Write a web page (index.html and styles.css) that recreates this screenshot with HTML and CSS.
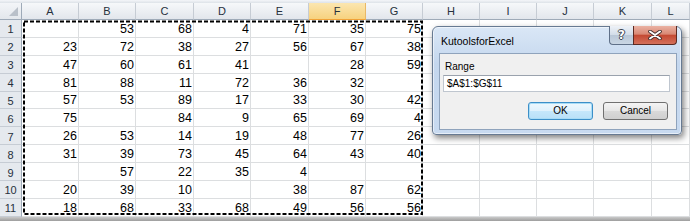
FILE: index.html
```html
<!DOCTYPE html>
<html>
<head>
<meta charset="utf-8">
<link rel="stylesheet" href="styles.css">
</head>
<body>
<div class="sheet">
  <div class="topstrip"></div>
  <div class="grid">
    <div class="corner"><svg width="9" height="9" viewBox="0 0 9 9"><path d="M9 0V9H0Z" fill="#b9c0c9"/></svg></div>
    <div class="ch">A</div><div class="ch">B</div><div class="ch">C</div><div class="ch">D</div><div class="ch">E</div><div class="ch sel">F</div><div class="ch">G</div><div class="ch">H</div><div class="ch">I</div><div class="ch">J</div><div class="ch">K</div><div class="ch">L</div>

    <div class="rh">1</div><div class="c"></div><div class="c">53</div><div class="c">68</div><div class="c">4</div><div class="c">71</div><div class="c">35</div><div class="c">75</div><div class="c"></div><div class="c"></div><div class="c"></div><div class="c"></div><div class="c"></div>
    <div class="rh">2</div><div class="c">23</div><div class="c">72</div><div class="c">38</div><div class="c">27</div><div class="c">56</div><div class="c">67</div><div class="c">38</div><div class="c"></div><div class="c"></div><div class="c"></div><div class="c"></div><div class="c"></div>
    <div class="rh">3</div><div class="c">47</div><div class="c">60</div><div class="c">61</div><div class="c">41</div><div class="c"></div><div class="c">28</div><div class="c">59</div><div class="c"></div><div class="c"></div><div class="c"></div><div class="c"></div><div class="c"></div>
    <div class="rh">4</div><div class="c">81</div><div class="c">88</div><div class="c">11</div><div class="c">72</div><div class="c">36</div><div class="c">32</div><div class="c"></div><div class="c"></div><div class="c"></div><div class="c"></div><div class="c"></div><div class="c"></div>
    <div class="rh">5</div><div class="c">57</div><div class="c">53</div><div class="c">89</div><div class="c">17</div><div class="c">33</div><div class="c">30</div><div class="c">42</div><div class="c"></div><div class="c"></div><div class="c"></div><div class="c"></div><div class="c"></div>
    <div class="rh">6</div><div class="c">75</div><div class="c"></div><div class="c">84</div><div class="c">9</div><div class="c">65</div><div class="c">69</div><div class="c">4</div><div class="c"></div><div class="c"></div><div class="c"></div><div class="c"></div><div class="c"></div>
    <div class="rh">7</div><div class="c">26</div><div class="c">53</div><div class="c">14</div><div class="c">19</div><div class="c">48</div><div class="c">77</div><div class="c">26</div><div class="c"></div><div class="c"></div><div class="c"></div><div class="c"></div><div class="c"></div>
    <div class="rh">8</div><div class="c">31</div><div class="c">39</div><div class="c">73</div><div class="c">45</div><div class="c">64</div><div class="c">43</div><div class="c">40</div><div class="c"></div><div class="c"></div><div class="c"></div><div class="c"></div><div class="c"></div>
    <div class="rh">9</div><div class="c"></div><div class="c">57</div><div class="c">22</div><div class="c">35</div><div class="c">4</div><div class="c"></div><div class="c"></div><div class="c"></div><div class="c"></div><div class="c"></div><div class="c"></div><div class="c"></div>
    <div class="rh">10</div><div class="c">20</div><div class="c">39</div><div class="c">10</div><div class="c"></div><div class="c">38</div><div class="c">87</div><div class="c">62</div><div class="c"></div><div class="c"></div><div class="c"></div><div class="c"></div><div class="c"></div>
    <div class="rh">11</div><div class="c">18</div><div class="c">68</div><div class="c">33</div><div class="c">68</div><div class="c">49</div><div class="c">56</div><div class="c">56</div><div class="c"></div><div class="c"></div><div class="c"></div><div class="c"></div><div class="c"></div>
  </div>
  <div class="hbar"></div>

  <svg class="ants" width="690" height="221" viewBox="0 0 690 221">
    <rect x="24" y="21.5" width="398" height="192.5" fill="none" stroke="#000" stroke-width="2" stroke-dasharray="4 2"/>
  </svg>

  <div class="dialog">
    <div class="titlebar">
      <span class="title">KutoolsforExcel</span>
      <div class="tbtns">
        <div class="help"><span class="q">?</span></div>
        <div class="close">
          <svg width="14" height="10" viewBox="0 0 14 10">
            <path d="M2 1.5L12 8.5M12 1.5L2 8.5" stroke="#3a2a2a" stroke-width="3.6" stroke-linecap="round"/>
            <path d="M2 1.5L12 8.5M12 1.5L2 8.5" stroke="#fff" stroke-width="2" stroke-linecap="round"/>
          </svg>
        </div>
      </div>
    </div>
    <div class="client">
      <div class="label">Range</div>
      <div class="input">$A$1:$G$11</div>
      <div class="buttons">
        <div class="btn ok">OK</div>
        <div class="btn">Cancel</div>
      </div>
    </div>
  </div>
</div>
</body>
</html>
```
FILE: styles.css
```css
html, body {
  margin: 0;
  padding: 0;
  background: #fff;
}
.sheet {
  position: relative;
  width: 690px;
  height: 221px;
  overflow: hidden;
  display: flex;
  flex-direction: column;
  font-family: "Liberation Sans", Arial, sans-serif;
}
.topstrip {
  height: 3px;
  flex: none;
  background: linear-gradient(#f4f6f9, #dde2e8);
}
.grid {
  flex: none;
  display: grid;
  grid-template-columns: 22px 57px 57px 58px 57px 58px 57px 57px 57px 57px 57px 58px 1fr;
  grid-template-rows: 17px repeat(11, 17.9px);
}
.corner {
  box-sizing: border-box;
  background: linear-gradient(#f3f5f8, #e3e7ec);
  border-right: 1px solid #9eaab8;
  border-bottom: 1px solid #9eaab8;
  display: flex;
  align-items: flex-end;
  justify-content: flex-end;
  padding: 0 3px 3px 0;
}
.ch {
  box-sizing: border-box;
  background: linear-gradient(#f6f8fa, #e2e6ec);
  border-right: 1px solid #c6ccd4;
  border-bottom: 1px solid #9eaab8;
  font-size: 11px;
  color: #26303c;
  display: flex;
  align-items: center;
  justify-content: center;
}
.ch.sel {
  background: linear-gradient(#fbe6b0, #f7d27f);
  border-right-color: #e9b866;
  border-bottom-color: #f0a238;
}
.rh {
  box-sizing: border-box;
  background: #e5e9ee;
  border-right: 1px solid #9eaab8;
  border-bottom: 1px solid #c6ccd4;
  font-size: 11px;
  color: #26303c;
  display: flex;
  align-items: center;
  justify-content: center;
  padding-top: 2px;
}
.c {
  box-sizing: border-box;
  border-right: 1px solid #dcdee0;
  border-bottom: 1px solid #dcdee0;
  font-size: 12.5px;
  line-height: 13px;
  color: #000;
  display: flex;
  align-items: flex-end;
  justify-content: flex-end;
  padding: 0 1px 1px 0;
}
.hbar {
  flex: 1;
  background: linear-gradient(#c9c9c9, #9d9d9d);
}
.ants {
  position: absolute;
  left: 0;
  top: 0;
  pointer-events: none;
}
.dialog {
  position: absolute;
  left: 432px;
  top: 26px;
  width: 250px;
  height: 109px;
  box-sizing: border-box;
  border: 1px solid #677a92;
  border-radius: 6px 6px 4px 4px;
  background: linear-gradient(#dae7f6, #c4d7ee 35%, #c8daf0);
  box-shadow: 2px 3px 6px rgba(0, 0, 0, 0.5), inset 0 0 0 1px rgba(255, 255, 255, 0.55);
  display: flex;
  flex-direction: column;
  padding: 0 4px 4px 6px;
}
.titlebar {
  height: 26px;
  flex: none;
  display: flex;
  justify-content: space-between;
  align-items: flex-start;
}
.title {
  font-size: 10.5px;
  line-height: 12px;
  color: #000;
  margin-top: 8px;
  padding-left: 2px;
}
.tbtns {
  display: flex;
  margin-top: -1px;
}
.help {
  box-sizing: border-box;
  width: 24px;
  height: 19px;
  border: 1px solid #5f7088;
  border-right: none;
  border-top: none;
  border-radius: 0 0 0 4px;
  background: linear-gradient(#eef2f7, #d2dce8 50%, #b9c7d7 51%, #c9d6e4);
  display: flex;
  align-items: center;
  justify-content: center;
}
.q {
  font-family: "DejaVu Sans", sans-serif;
  font-weight: bold;
  font-size: 12px;
  line-height: 12px;
  color: #fff;
  text-shadow: 1px 0 0 #3d4652, -1px 0 0 #3d4652, 0 1px 0 #3d4652, 0 -1px 0 #3d4652;
}
.close {
  box-sizing: border-box;
  width: 44px;
  height: 19px;
  border: 1px solid #5b2a22;
  border-top: none;
  border-radius: 0 0 4px 0;
  background: linear-gradient(#eab2a3, #d98874 45%, #c44a33 52%, #d4705a);
  display: flex;
  align-items: center;
  justify-content: center;
}
.client {
  flex: 1;
  border: 1px solid #8fa3bc;
  background: #f0f0f0;
  display: flex;
  flex-direction: column;
  padding: 6px 0 0 3px;
}
.label {
  font-size: 10px;
  line-height: 13px;
  color: #000;
  margin-left: 2px;
}
.input {
  box-sizing: border-box;
  height: 17px;
  margin: 2px 6px 0 0;
  background: #fff;
  border: 1px solid #bfc6cf;
  border-top-color: #9aa2ad;
  font-size: 10px;
  line-height: 15px;
  padding-left: 3px;
  color: #000;
}
.buttons {
  display: flex;
  justify-content: flex-end;
  gap: 10px;
  margin: 10px 8px 0 0;
}
.btn {
  box-sizing: border-box;
  width: 65px;
  height: 18px;
  border: 1px solid #707070;
  border-radius: 3px;
  background: linear-gradient(#f4f4f4, #e6e6e6 50%, #d9d9d9 51%, #cfcfcf);
  font-size: 10px;
  line-height: 16px;
  text-align: center;
  color: #000;
}
.btn.ok {
  border-color: #3c8fc8;
  background: linear-gradient(#eef8fe, #dff1fc 50%, #c5e7fb 51%, #b9e0f8);
  box-shadow: inset 0 0 0 1px #a8dcf6;
}
```
